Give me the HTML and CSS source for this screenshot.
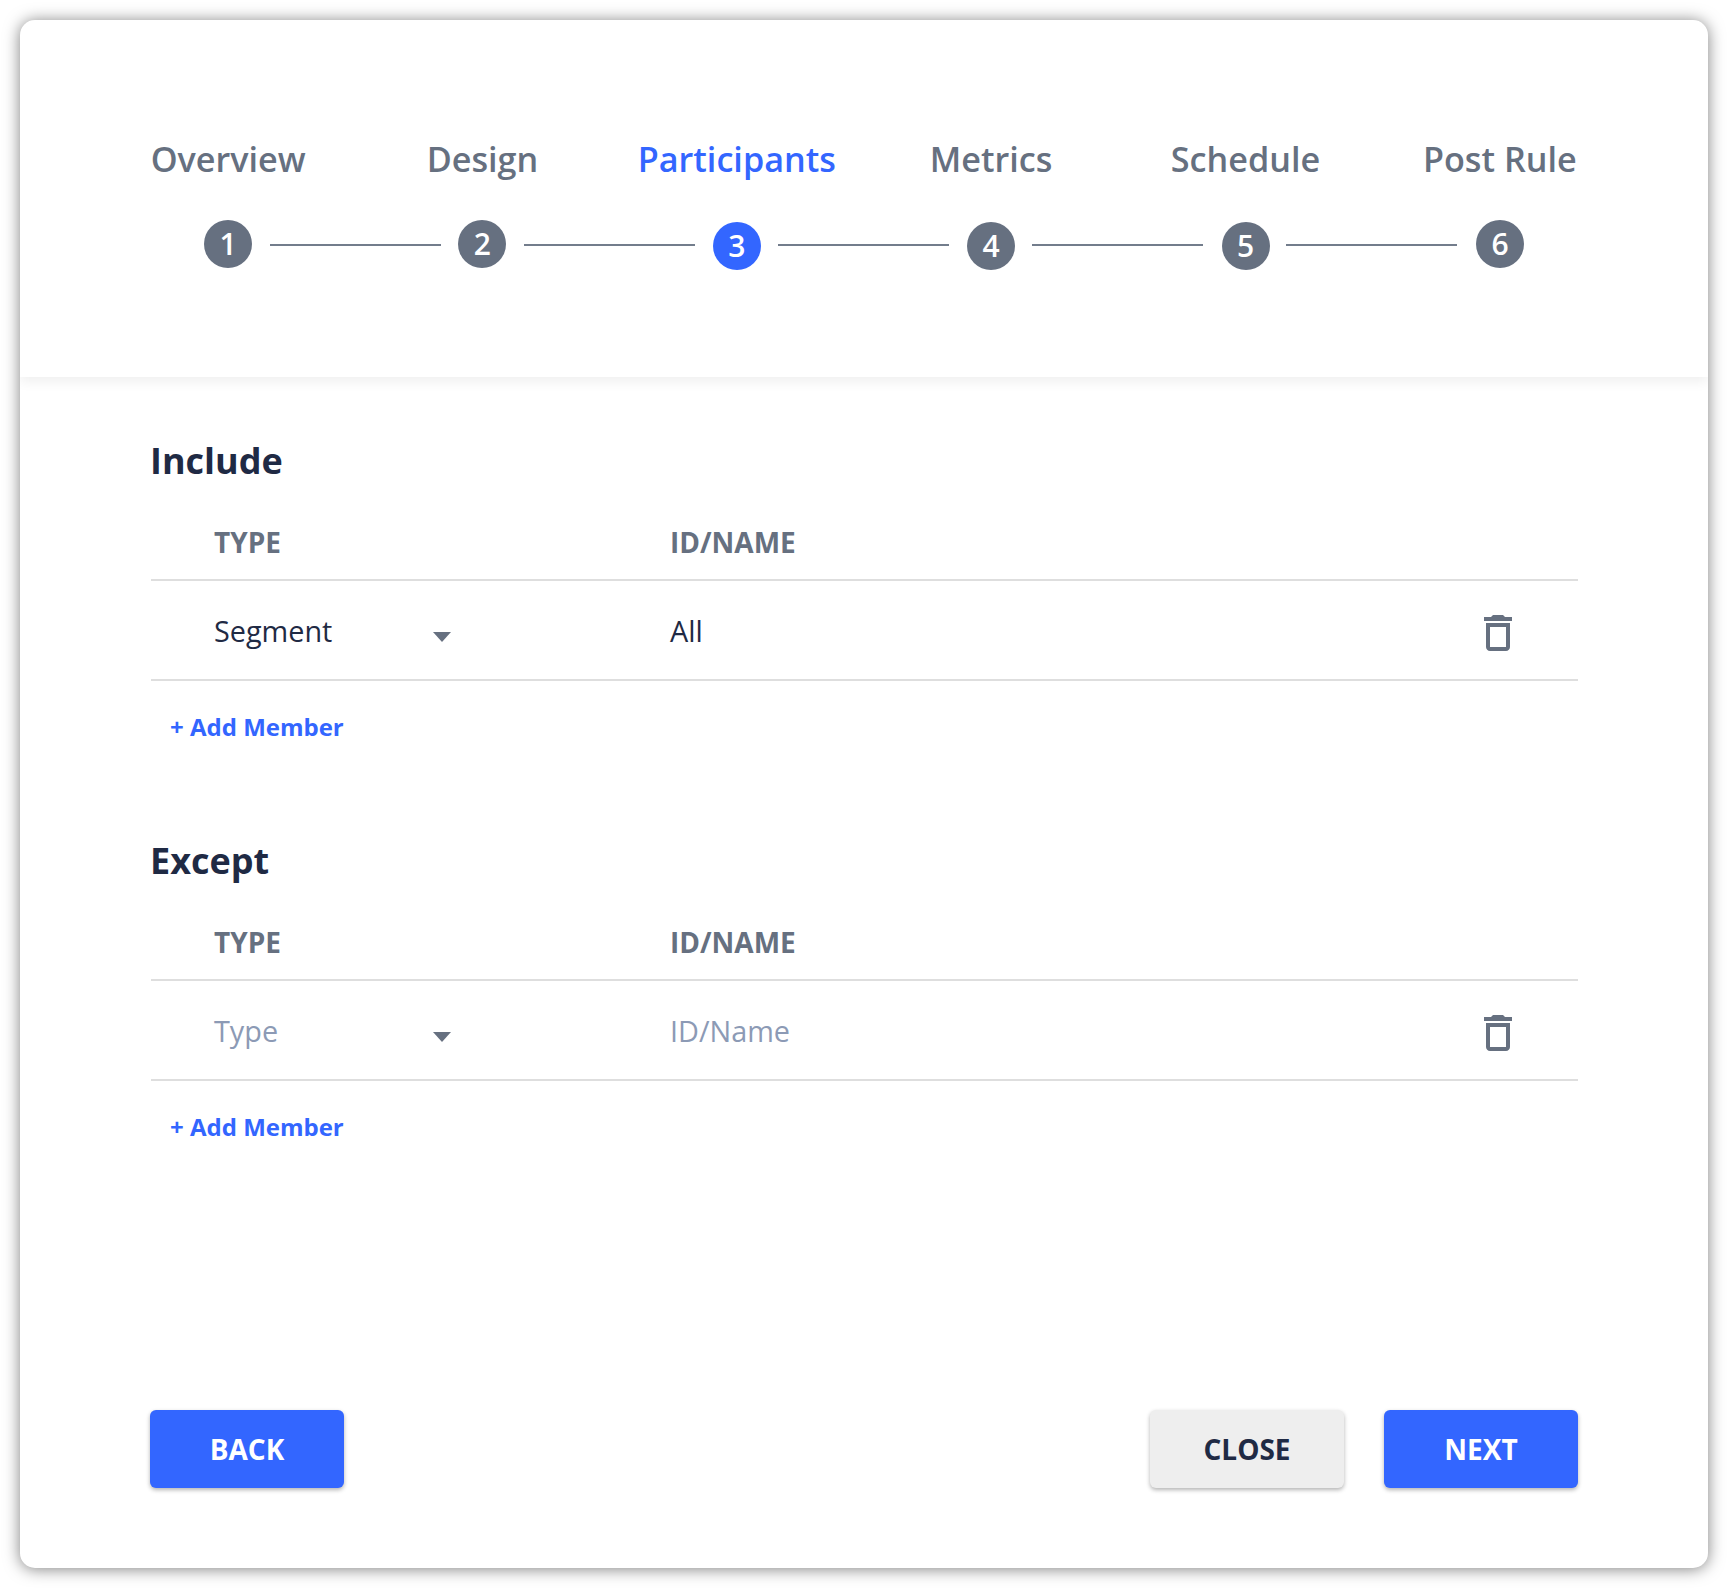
FILE: index.html
```html
<!DOCTYPE html>
<html lang="en">
<head>
<meta charset="utf-8">
<title>Participants</title>
<link rel="stylesheet" href="styles.css">
</head>
<body>
<div class="card">
  <header class="stepper">
    <div class="labels">
      <span>Overview</span>
      <span>Design</span>
      <span class="active">Participants</span>
      <span>Metrics</span>
      <span>Schedule</span>
      <span>Post Rule</span>
    </div>
    <div class="track">
      <span class="dot">1</span><span class="line"></span>
      <span class="dot">2</span><span class="line"></span>
      <span class="dot low active">3</span><span class="line"></span>
      <span class="dot low">4</span><span class="line"></span>
      <span class="dot low">5</span><span class="line"></span>
      <span class="dot">6</span>
    </div>
  </header>
  <main class="content">
    <section class="section">
      <h2 class="title">Include</h2>
      <div class="row head"><span class="type">TYPE</span><span class="name">ID/NAME</span></div>
      <div class="row body-row">
        <div class="type"><span>Segment</span><i class="caret"></i></div>
        <span class="name">All</span>
        <svg class="trash" viewBox="0 0 24 24"><path d="M6 19c0 1.1.9 2 2 2h8c1.1 0 2-.9 2-2V7H6v12zM8 9h8v10H8V9zm7.5-5l-1-1h-5l-1 1H5v2h14V4z"/></svg>
      </div>
      <a class="add">+ Add Member</a>
    </section>
    <section class="section">
      <h2 class="title">Except</h2>
      <div class="row head"><span class="type">TYPE</span><span class="name">ID/NAME</span></div>
      <div class="row body-row placeholder">
        <div class="type"><span>Type</span><i class="caret"></i></div>
        <span class="name">ID/Name</span>
        <svg class="trash" viewBox="0 0 24 24"><path d="M6 19c0 1.1.9 2 2 2h8c1.1 0 2-.9 2-2V7H6v12zM8 9h8v10H8V9zm7.5-5l-1-1h-5l-1 1H5v2h14V4z"/></svg>
      </div>
      <a class="add">+ Add Member</a>
    </section>
    <footer class="actions">
      <button class="btn primary back">BACK</button>
      <div class="right">
        <button class="btn neutral">CLOSE</button>
        <button class="btn primary">NEXT</button>
      </div>
    </footer>
  </main>
</div>
</body>
</html>
```
FILE: styles.css
```css
* { box-sizing: border-box; }
html, body { margin: 0; height: 1588px; background: #fff; overflow: hidden; }
body { padding: 20px; font-family: "Open Sans", "Noto Sans", sans-serif; color: #1f2a44; }
.card {
  width: 1688px; height: 1548px; background: #fff; border-radius: 15px;
  box-shadow: 0 1px 16px rgba(0,0,0,.5);
  display: flex; flex-direction: column; overflow: hidden;
}
.stepper {
  height: 357px; padding: 117px 81px 0; flex: none;
  box-shadow: 0 4px 12px rgba(0,0,0,.07); position: relative;
}
.labels { display: grid; grid-template-columns: repeat(6, 1fr); text-align: center; font-size: 34.2px; line-height: 44px; color: #667080; font-weight: 600; }
.labels .active { color: #3366ff; }
.track { display: flex; align-items: flex-start; margin: 39px 103px 0; }
.dot {
  width: 48px; height: 48px; border-radius: 50%; background: #667080; color: #fff; flex: none;
  font-size: 30px; line-height: 48px; text-align: center; font-weight: 600;
}
.dot.low { margin-top: 2px; }
.dot.active { background: #3366ff; }
.line { flex: none; width: 171px; height: 2px; margin: 24px 17.4px 0 18px; background: #737d8c; }
.line:nth-child(6) { margin-left: 17.5px; margin-right: 17.9px; }
.line:nth-child(8) { margin-left: 17px; margin-right: 18.4px; }
.line:nth-child(10) { margin-left: 16.5px; margin-right: 18.9px; }
.content { flex: 1; display: flex; flex-direction: column; padding: 60px 130px 80px 131px; }
.section { height: 400px; }
.title { margin: 0 0 0 -1px; font-size: 36px; line-height: 48px; font-weight: 700; color: #1f2a44; }
.row { display: flex; align-items: center; padding-left: 63px; border-bottom: 2px solid #dedede; }
.head { margin-top: 39px; height: 57px; padding-bottom: 19px; font-size: 28px; line-height: 36px; font-weight: 700; color: #667080; }
.body-row { height: 100px; font-size: 28.8px; line-height: 38px; padding-right: 56px; padding-top: 2px; }
.type { width: 237px; margin-right: 219px; display: flex; justify-content: space-between; align-items: center; flex: none; }
.name { flex: 1; }
.placeholder { color: #8c9ab5; }
.caret { width: 0; height: 0; border-left: 9.5px solid transparent; border-right: 9.5px solid transparent; border-top: 10px solid #667080; margin-top: 12px; }
.trash { width: 48px; height: 48px; fill: #667080; flex: none; margin-top: 4px; }
.add { display: block; margin-top: 28px; padding-left: 19px; font-size: 24px; line-height: 36px; font-weight: 700; color: #3366ff; }
.actions { margin-top: auto; display: flex; justify-content: space-between; }
.right { display: flex; gap: 40px; }
.btn { width: 194px; height: 78px; border: 0; border-radius: 6px; font-family: inherit; font-size: 28px; font-weight: 700; box-shadow: 0 2px 4px rgba(0,0,0,.3); padding: 0; }
.primary { background: #3366ff; color: #fff; }
.neutral { background: #eeeeee; color: #1f2a44; }
.back { margin-left: -1px; }
```
